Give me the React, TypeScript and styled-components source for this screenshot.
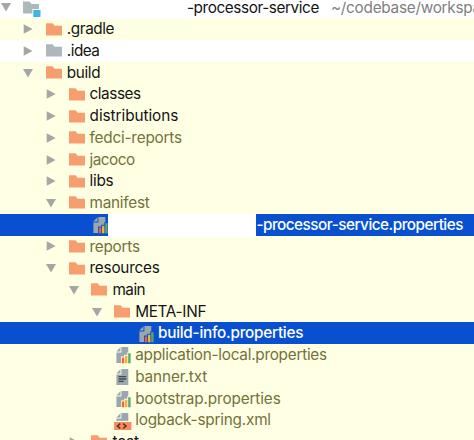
import React from 'react';
import styled, {createGlobalStyle} from 'styled-components';

type IconName = 'module' | 'folder' | 'plainFolder' | 'chart' | 'text' | 'xml';
type RowTone = 'plain' | 'excluded' | 'selected';

interface ITreeNode {
  label: string;
  level: number;
  icon: IconName;
  spacing: number;
  arrow?: 'open' | 'closed';
  ignored?: boolean;
  tone?: RowTone;
  // width of the blanked out part in front of the label
  blank?: number;
  path?: string;
}

const NODES: ITreeNode[] = [
  {
    label: '-processor-service',
    level: 0,
    icon: 'module',
    spacing: -0.4,
    arrow: 'open',
    tone: 'plain',
    blank: 144,
    path: '~/codebase/workspace',
  },
  {label: '.gradle', level: 1, icon: 'folder', spacing: -0.4, arrow: 'closed'},
  {
    label: '.idea',
    level: 1,
    icon: 'plainFolder',
    spacing: -0.5,
    arrow: 'closed',
    tone: 'plain',
  },
  {label: 'build', level: 1, icon: 'folder', spacing: -0.35, arrow: 'open'},
  {label: 'classes', level: 2, icon: 'folder', spacing: -0.45, arrow: 'closed'},
  {label: 'distributions', level: 2, icon: 'folder', spacing: -0.05, arrow: 'closed'},
  {
    label: 'fedci-reports',
    level: 2,
    icon: 'folder',
    spacing: -0.2,
    arrow: 'closed',
    ignored: true,
  },
  {
    label: 'jacoco',
    level: 2,
    icon: 'folder',
    spacing: -0.5,
    arrow: 'closed',
    ignored: true,
  },
  {label: 'libs', level: 2, icon: 'folder', spacing: -0.3, arrow: 'closed'},
  {
    label: 'manifest',
    level: 2,
    icon: 'folder',
    spacing: -0.25,
    arrow: 'open',
    ignored: true,
  },
  {
    label: '-processor-service.properties',
    level: 3,
    icon: 'chart',
    spacing: -0.5,
    tone: 'selected',
    blank: 148,
  },
  {
    label: 'reports',
    level: 2,
    icon: 'folder',
    spacing: -0.25,
    arrow: 'closed',
    ignored: true,
  },
  {label: 'resources', level: 2, icon: 'folder', spacing: -0.22, arrow: 'open'},
  {label: 'main', level: 3, icon: 'folder', spacing: -0.5, arrow: 'open'},
  {label: 'META-INF', level: 4, icon: 'folder', spacing: -0.3, arrow: 'open'},
  {
    label: 'build-info.properties',
    level: 5,
    icon: 'chart',
    spacing: -0.25,
    tone: 'selected',
  },
  {
    label: 'application-local.properties',
    level: 4,
    icon: 'chart',
    spacing: -0.25,
    ignored: true,
  },
  {label: 'banner.txt', level: 4, icon: 'text', spacing: -0.1, ignored: true},
  {
    label: 'bootstrap.properties',
    level: 4,
    icon: 'chart',
    spacing: -0.12,
    ignored: true,
  },
  {label: 'logback-spring.xml', level: 4, icon: 'xml', spacing: -0.2, ignored: true},
  {label: 'test', level: 3, icon: 'folder', spacing: -0.1, arrow: 'closed'},
];

const FolderShape = ({color}: {color: string}) => (
  <path d="M0 2.3h6.6l2 2.4H16V14.4H0z" fill={color} />
);

const SheetShape = () => (
  <>
    <path d="M7.4 1.1H14.3V17H2.4V6.4h5z" fill="#9aa7b0" />
    <path d="M6.5 1.2v4.3H2.3z" fill="#9aa7b0" />
  </>
);

const NodeIcon = ({name, tone}: {name: IconName; tone: RowTone}) => {
  const back = BACKGROUNDS[tone];

  return (
    <IconSvg viewBox="0 0 18 17">
      {name === 'folder' && <FolderShape color="#f79e6e" />}
      {name === 'plainFolder' && <FolderShape color="#adb8bd" />}
      {name === 'module' && (
        <>
          <path d="M0 2.6h6.6l2 2.4H16V10H9.4v4.6H0z" fill="#adb8bd" />
          <path d="M10.3 11h7.2v7h-7.2z" fill="#40b6e0" />
        </>
      )}
      {name === 'chart' && (
        <>
          <SheetShape />
          <path d="M7 17.2V10.6h3.1V8.8h3.2V6.2h4.4v11z" fill={back} />
          <path d="M7.8 11.5h2.4v5.8H7.8z" fill="#f26522" />
          <path d="M11 9.8h2.4v7.5H11z" fill="#f4af3d" />
          <path d="M14.2 7.2h2.4v10.1h-2.4z" fill="#59a869" />
        </>
      )}
      {name === 'text' && (
        <>
          <SheetShape />
          <path
            d="M4.6 8.6h7.6M4.6 11h7.6M4.6 13.4h5"
            stroke="#43494d"
            strokeWidth="1.3"
          />
        </>
      )}
      {name === 'xml' && (
        <>
          <SheetShape />
          <path d="M0 8.8h18V18H0z" fill={back} />
          <path d="M0.1 10H17.4V18H0.1z" fill="#f78b5e" />
          <path
            d="M6.3 11.6L3.4 14l2.9 2.4M9.2 11.6l2.9 2.4-2.9 2.4"
            fill="none"
            stroke="#5c2c1a"
            strokeWidth="1.4"
          />
        </>
      )}
    </IconSvg>
  );
};

const App = () => (
  <>
    <GlobalStyle />
    <Tree>
      {NODES.map(node => {
        const tone = node.tone ?? 'excluded';

        return (
          <Row key={node.label} $tone={tone} $level={node.level}>
            <ArrowSlot viewBox="0 0 10 10">
              {node.arrow === 'open' && <path d="M0 1h10L5 9.5z" fill="#a6a6a6" />}
              {node.arrow === 'closed' && (
                <path d="M0.7 0.2v9.6L9.6 5z" fill="#a6a6a6" />
              )}
            </ArrowSlot>
            <NodeIcon name={node.icon} tone={tone} />
            {node.blank && <Blank $width={node.blank} $root={node.level === 0} />}
            <Label
              $tone={tone}
              $ignored={node.ignored}
              $flush={Boolean(node.blank)}
              $spacing={node.spacing}
            >
              {node.label}
            </Label>
            {node.path && <Path>{node.path}</Path>}
          </Row>
        );
      })}
    </Tree>
  </>
);

const BACKGROUNDS: Record<RowTone, string> = {
  plain: '#ffffff',
  excluded: '#ffffe4',
  selected: '#0850d0',
};

const GlobalStyle = createGlobalStyle`
  body {
    margin: 0;
    overflow: hidden;
    background: #ffffe4;
  }
`;

const Tree = styled.div`
  width: 474px;
  height: 440px;
  overflow: hidden;
  font-family: Inter, 'Liberation Sans', sans-serif;
  font-size: 15.3px;
  line-height: 21.72px;
`;

const Row = styled.div<{$tone: RowTone; $level: number}>`
  display: flex;
  align-items: center;
  box-sizing: border-box;
  height: 21.72px;
  padding-left: ${props => props.$level * 22.8 + 0.6}px;
  white-space: nowrap;
  background: ${props => BACKGROUNDS[props.$tone]};

  &:first-child {
    margin-top: -3.4px;
  }
`;

const ArrowSlot = styled.svg`
  flex: none;
  width: 10px;
  height: 10px;
  margin-right: 12.4px;
`;

const IconSvg = styled.svg`
  flex: none;
  width: 18px;
  height: 17px;
  overflow: visible;
`;

// spills one pixel over the row below
const Blank = styled.span<{$width: number; $root: boolean}>`
  position: relative;
  flex: none;
  align-self: stretch;
  width: ${props => props.$width}px;
  margin-left: ${props => (props.$root ? 2 : -1)}px;
  background: #ffffff;
  box-shadow: 0 1px #ffffff;
`;

const Label = styled.span<{
  $tone: RowTone;
  $ignored?: boolean;
  $flush: boolean;
  $spacing: number;
}>`
  margin-left: ${props => (props.$flush ? 0 : 3)}px;
  letter-spacing: ${props => props.$spacing}px;
  font-weight: ${props => (props.$tone === 'selected' ? 500 : 400)};
  color: ${props =>
    props.$tone === 'selected'
      ? '#ffffff'
      : props.$ignored
      ? '#72723a'
      : '#141414'};
`;

const Path = styled.span`
  margin-left: 12px;
  letter-spacing: -0.25px;
  color: #808080;
`;

export default App;
